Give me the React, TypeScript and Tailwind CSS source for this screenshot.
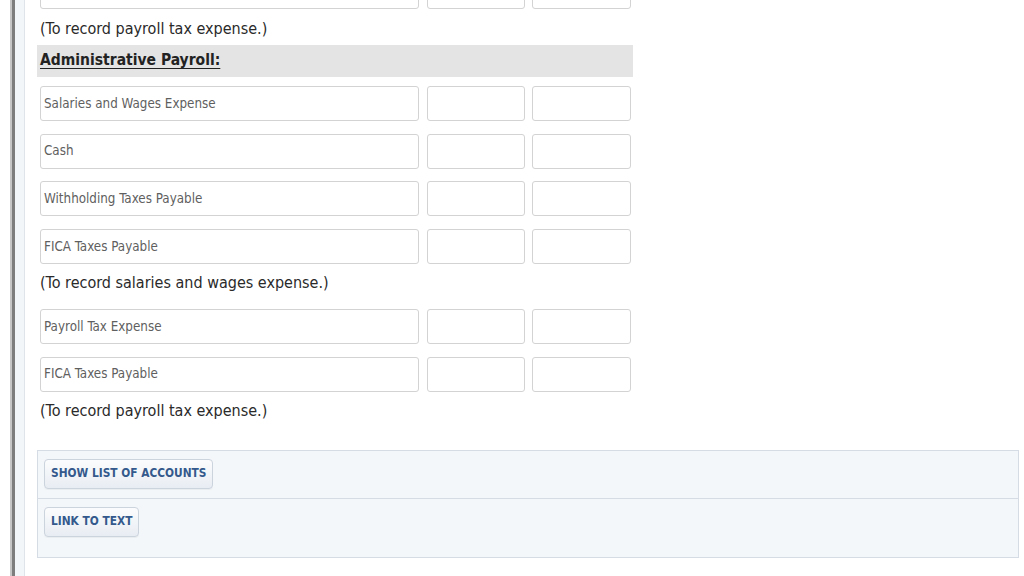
const font = { fontFamily: '"DejaVu Sans Condensed", "DejaVu Sans", sans-serif' };

type Row = { account: string };

function EntryRow({ account }: Row) {
  return (
    <div className="flex h-[35px] pl-[3px]">
      <div className="flex w-[379px] items-center rounded-[3px] border border-[#d3d3d3] bg-white pl-[3px] text-[13.3px] text-[#5f5f5f]">
        {account}
      </div>
      <div className="ml-[8px] w-[98px] rounded-[3px] border border-[#d3d3d3] bg-white" />
      <div className="ml-[7px] w-[99px] rounded-[3px] border border-[#d3d3d3] bg-white" />
    </div>
  );
}

function Note({ children }: { children: string }) {
  return (
    <div className="flex h-[36px] items-center pl-[3px] pt-[3px] text-[16px] text-[#2a2a2a]">
      {children}
    </div>
  );
}

function PanelButton({ label }: { label: string }) {
  return (
    <button className="h-[30px] rounded-[4px] border border-[#cbd3dd] bg-gradient-to-b from-[#fbfcfd] to-[#e8edf3] px-[6px] text-[11.8px] font-bold text-[#34598c] shadow-[0_1px_0_rgba(0,0,0,0.04)]">
      {label}
    </button>
  );
}

export default function App() {
  return (
    <div className="flex h-[576px] w-[1024px] overflow-hidden bg-white" style={font}>
      <div className="w-[10px] bg-white" />
      <div className="w-[2px] bg-[#c6c6c6]" />
      <div className="w-[3px] bg-[#7d7d7d]" />
      <div className="w-[10px] border-r border-[#dfe4ea] bg-[#f3f6f9]" />
      <div className="flex-1 pl-[12px]">
        <div className="-mt-[26px] w-[596px]">
          <EntryRow account="" />
          <Note>(To record payroll tax expense.)</Note>
          <div className="flex h-[32px] items-center bg-[#e4e4e4] pl-[3px] text-[15.5px] font-bold text-[#222] underline underline-offset-[3px]">
            Administrative Payroll:
          </div>
          <div className="mt-[9px] flex flex-col gap-[12.67px]">
            <EntryRow account="Salaries and Wages Expense" />
            <EntryRow account="Cash" />
            <EntryRow account="Withholding Taxes Payable" />
            <EntryRow account="FICA Taxes Payable" />
          </div>
          <Note>(To record salaries and wages expense.)</Note>
          <div className="mt-[9px] flex flex-col gap-[12.67px]">
            <EntryRow account="Payroll Tax Expense" />
            <EntryRow account="FICA Taxes Payable" />
          </div>
          <Note>(To record payroll tax expense.)</Note>
        </div>
        <div className="mt-[22px] w-[982px] border border-[#d6dce4] bg-[#f4f7fa]">
          <div className="flex h-[47px] items-center pl-[6px]">
            <PanelButton label="SHOW LIST OF ACCOUNTS" />
          </div>
          <div className="h-[59px] border-t border-[#d6dce4] pl-[6px] pt-[8px]">
            <PanelButton label="LINK TO TEXT" />
          </div>
        </div>
      </div>
    </div>
  );
}
